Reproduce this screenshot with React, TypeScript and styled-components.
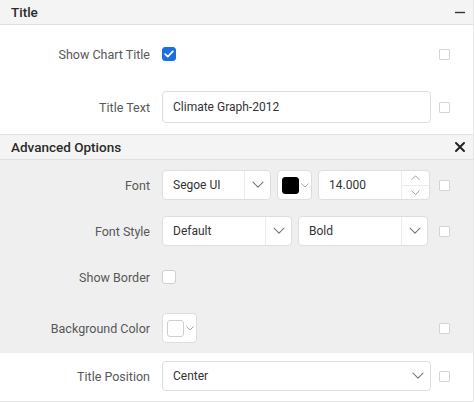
import React, { FC } from 'react';
import styled, { createGlobalStyle } from 'styled-components';

const GlobalStyle = createGlobalStyle`
  html, body {
    margin: 0;
    padding: 0;
    background: #ffffff;
  }
  body {
    font-family: Roboto, "Noto Sans", Arial, sans-serif;
    -webkit-font-smoothing: antialiased;
  }
`

const Panel = styled.div`
  width: 473px;
  height: 401px;
  border-right: 1px solid #e6e6e6;
  border-bottom: 1px solid #e6e6e6;
  overflow: hidden;
  background: #ffffff;
`

const Header = styled.div<{ $top?: boolean }>`
  display: flex;
  align-items: center;
  justify-content: space-between;
  height: 24px;
  padding: 0 7px 0 11px;
  background: #f4f4f4;
  border-top: ${p => (p.$top ? '1px solid #e2e2e2' : 'none')};
  border-bottom: 1px solid #e0e0e0;
  font-size: 13.5px;
  font-weight: 500;
  color: #2b2b2b;
`

const Section = styled.div<{ $gray?: boolean; $pt: number; $pb: number }>`
  display: flex;
  flex-direction: column;
  background: ${p => (p.$gray ? '#efefef' : '#ffffff')};
  padding: ${p => `${p.$pt}px 0 ${p.$pb}px`};
`

const Row = styled.div<{ $mt?: number; $h?: number }>`
  display: flex;
  align-items: center;
  height: ${p => p.$h ?? 30}px;
  margin-top: ${p => p.$mt ?? 0}px;
`

const Label = styled.div`
  width: 150px;
  text-align: right;
  font-size: 12.5px;
  color: #585858;
  padding-right: 12px;
  box-sizing: content-box;
  white-space: nowrap;
`

const Controls = styled.div`
  display: flex;
  align-items: center;
  width: 269px;
  gap: 6px;
`

const Box = styled.div<{ $w?: number; $h?: number }>`
  display: flex;
  align-items: center;
  box-sizing: border-box;
  width: ${p => (p.$w ? `${p.$w}px` : '100%')};
  height: ${p => p.$h ?? 30}px;
  background: #ffffff;
  border: 1px solid #dedede;
  border-radius: 4px;
  font-size: 12px;
  color: #333333;
  flex-shrink: 0;
`

const BoxText = styled.span`
  flex: 1;
  padding-left: 10px;
`

const Arrow = styled.div<{ $sep?: boolean }>`
  display: flex;
  align-items: center;
  justify-content: center;
  width: 25px;
  height: 100%;
  border-left: ${p => (p.$sep ? '1px solid #ececec' : 'none')};
  color: #777777;
`

const Spinner = styled.div`
  display: flex;
  flex-direction: column;
  width: 27px;
  height: 100%;
  border-left: 1px solid #ececec;
`

const SpinHalf = styled.div<{ $top?: boolean }>`
  flex: 1;
  display: flex;
  align-items: center;
  justify-content: center;
  color: #8a8a8a;
  border-bottom: ${p => (p.$top ? '1px solid #ececec' : 'none')};
`

const Swatch = styled.div<{ $color: string }>`
  width: 17px;
  height: 17px;
  margin-left: 4px;
  border-radius: 3px;
  background: ${p => p.$color};
  border: 1px solid ${p => (p.$color === '#000000' ? '#000000' : '#cfcfcf')};
  box-sizing: border-box;
`

const SmallChevron = styled.div`
  display: flex;
  align-items: center;
  justify-content: center;
  flex: 1;
  color: #888888;
`

const Check = styled.div<{ $checked?: boolean }>`
  display: flex;
  align-items: center;
  justify-content: center;
  width: 14px;
  height: 14px;
  box-sizing: border-box;
  border-radius: 3px;
  background: ${p => (p.$checked ? '#1b6fe0' : '#ffffff')};
  border: 1px solid ${p => (p.$checked ? '#1b6fe0' : '#cfcfcf')};
`

const Mini = styled.div`
  width: 11px;
  height: 11px;
  box-sizing: border-box;
  border: 1px solid #d4d4d4;
  background: #ffffff;
  border-radius: 1px;
  margin-left: auto;
  margin-right: 23px;
`

const Chevron: FC<{ size?: number; up?: boolean }> = ({ size = 12, up }) => (
  <svg width={size} height={size * 0.6} viewBox="0 0 12 7" fill="none">
    <path
      d={up ? 'M1 6L6 1L11 6' : 'M1 1L6 6L11 1'}
      stroke="currentColor"
      strokeWidth="1.1"
      strokeLinecap="round"
      strokeLinejoin="round"
    />
  </svg>
)

const Dropdown: FC<{ w?: number; text: string; sep?: boolean }> = ({ w, text, sep = true }) => (
  <Box $w={w}>
    <BoxText>{text}</BoxText>
    <Arrow $sep={sep}>
      <Chevron />
    </Arrow>
  </Box>
)

const ColorPick: FC<{ color: string }> = ({ color }) => (
  <Box $w={35}>
    <Swatch $color={color} />
    <SmallChevron>
      <Chevron size={8} />
    </SmallChevron>
  </Box>
)

const App: FC = () => (
  <>
    <GlobalStyle />
    <Panel>
      <Header>
        <span>Title</span>
        <svg width="12" height="12" viewBox="0 0 12 12">
          <path d="M1 6.5H11" stroke="#333" strokeWidth="1.4" />
        </svg>
      </Header>
      <Section $pt={14} $pb={11}>
        <Row>
          <Label>Show Chart Title</Label>
          <Check $checked>
            <svg width="10" height="8" viewBox="0 0 10 8" fill="none">
              <path d="M1.2 4.2L3.8 6.6L8.8 1.4" stroke="#fff" strokeWidth="1.8" strokeLinecap="round" strokeLinejoin="round" />
            </svg>
          </Check>
          <Mini />
        </Row>
        <Row $mt={22} $h={32}>
          <Label>Title Text</Label>
          <Controls>
            <Box $h={32}>
              <BoxText>Climate Graph-2012</BoxText>
            </Box>
          </Controls>
          <Mini />
        </Row>
      </Section>
      <Header $top>
        <span>Advanced Options</span>
        <svg width="12" height="12" viewBox="0 0 12 12">
          <path d="M2 2L10 10M10 2L2 10" stroke="#222" strokeWidth="2" strokeLinecap="round" />
        </svg>
      </Header>
      <Section $gray $pt={10} $pb={10}>
        <Row>
          <Label>Font</Label>
          <Controls>
            <Dropdown w={109} text="Segoe UI" />
            <ColorPick color="#000000" />
            <Box $w={112}>
              <BoxText>14.000</BoxText>
              <Spinner>
                <SpinHalf $top>
                  <Chevron size={9} up />
                </SpinHalf>
                <SpinHalf>
                  <Chevron size={9} />
                </SpinHalf>
              </Spinner>
            </Box>
          </Controls>
          <Mini />
        </Row>
        <Row $mt={16}>
          <Label>Font Style</Label>
          <Controls>
            <Dropdown w={130} text="Default" />
            <Dropdown w={130} text="Bold" />
          </Controls>
          <Mini />
        </Row>
        <Row $mt={16}>
          <Label>Show Border</Label>
          <Check />
        </Row>
        <Row $mt={21}>
          <Label>Background Color</Label>
          <ColorPick color="#ffffff" />
          <Mini />
        </Row>
      </Section>
      <Section $pt={8} $pb={10}>
        <Row>
          <Label>Title Position</Label>
          <Controls>
            <Dropdown text="Center" sep={false} />
          </Controls>
          <Mini />
        </Row>
      </Section>
    </Panel>
  </>
)

export default App
